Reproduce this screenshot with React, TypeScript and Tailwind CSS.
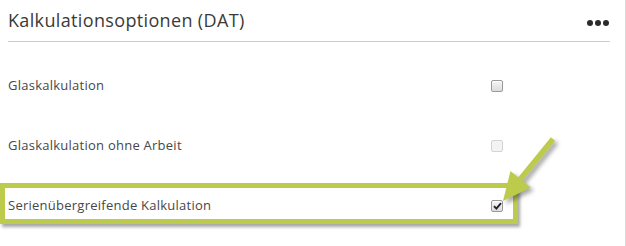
import React from 'react';

type Option = { label: string; checked?: boolean; disabled?: boolean };

const options: Option[] = [
  { label: 'Glaskalkulation' },
  { label: 'Glaskalkulation ohne Arbeit', disabled: true },
  { label: 'Serienübergreifende Kalkulation', checked: true },
];

function Box({ checked, disabled }: { checked?: boolean; disabled?: boolean }) {
  if (disabled) {
    return <span className="block w-[12px] h-[12px] rounded-[2px] border border-[#d4d4d4] bg-[#f3f3f3]" />;
  }
  return (
    <span className="flex items-center justify-center w-[12px] h-[12px] rounded-[2px] border border-[#9a9a9a] bg-gradient-to-b from-[#f6f6f6] to-[#dcdcdc] shadow-[inset_0_1px_0_#fff]">
      {checked && (
        <svg width="9" height="8" viewBox="0 0 9 8">
          <path d="M1 4.2 L3.4 6.6 L8 1.2" fill="none" stroke="#222" strokeWidth="1.9" />
        </svg>
      )}
    </span>
  );
}

export default function App() {
  return (
    <div
      className="relative w-[626px] h-[246px] overflow-hidden bg-white text-[#444]"
      style={{ fontFamily: '"Open Sans", Arial, sans-serif' }}
    >
      <div className="h-[246px] w-[626px] border-r border-[#d9d9d9] pl-[8px] pr-[15px]">
        {/* header */}
        <div className="flex h-[42px] items-center justify-between border-b border-[#cccccc]">
          <h2 className="text-[18px] leading-none text-[#3a3a3a] tracking-[0.35px] pb-[2px]">
            Kalkulationsoptionen (DAT)
          </h2>
          <div className="flex gap-[2px] pt-[4px] pr-[1px]">
            <span className="w-[6px] h-[6px] rounded-full bg-[#2b2b2b]" />
            <span className="w-[6px] h-[6px] rounded-full bg-[#2b2b2b]" />
            <span className="w-[6px] h-[6px] rounded-full bg-[#2b2b2b]" />
          </div>
        </div>

        {/* options */}
        <div className="pt-[14px]">
          {options.map((o) => (
            <div key={o.label} className="flex h-[60px] items-center">
              <span className="w-[483px] text-[13px] tracking-[0.25px] text-[#474747]">{o.label}</span>
              <Box checked={o.checked} disabled={o.disabled} />
            </div>
          ))}
        </div>
      </div>

      {/* annotation: highlight frame */}
      <div className="absolute left-0 top-[183px] w-[518px] h-[41px] border-[5px] border-[#bdcb4d] shadow-[2px_3px_3px_rgba(0,0,0,0.35)]" />

      {/* annotation: arrow */}
      <svg
        className="absolute left-0 top-0 pointer-events-none"
        width="626"
        height="246"
        style={{ filter: 'drop-shadow(3px 3px 2px rgba(0,0,0,0.35))' }}
      >
        <line x1="553" y1="139" x2="518" y2="182" stroke="#bdcb4d" strokeWidth="5.5" />
        <polygon points="503,201 510.5,171 530.7,187.4" fill="#bdcb4d" />
      </svg>
    </div>
  );
}
